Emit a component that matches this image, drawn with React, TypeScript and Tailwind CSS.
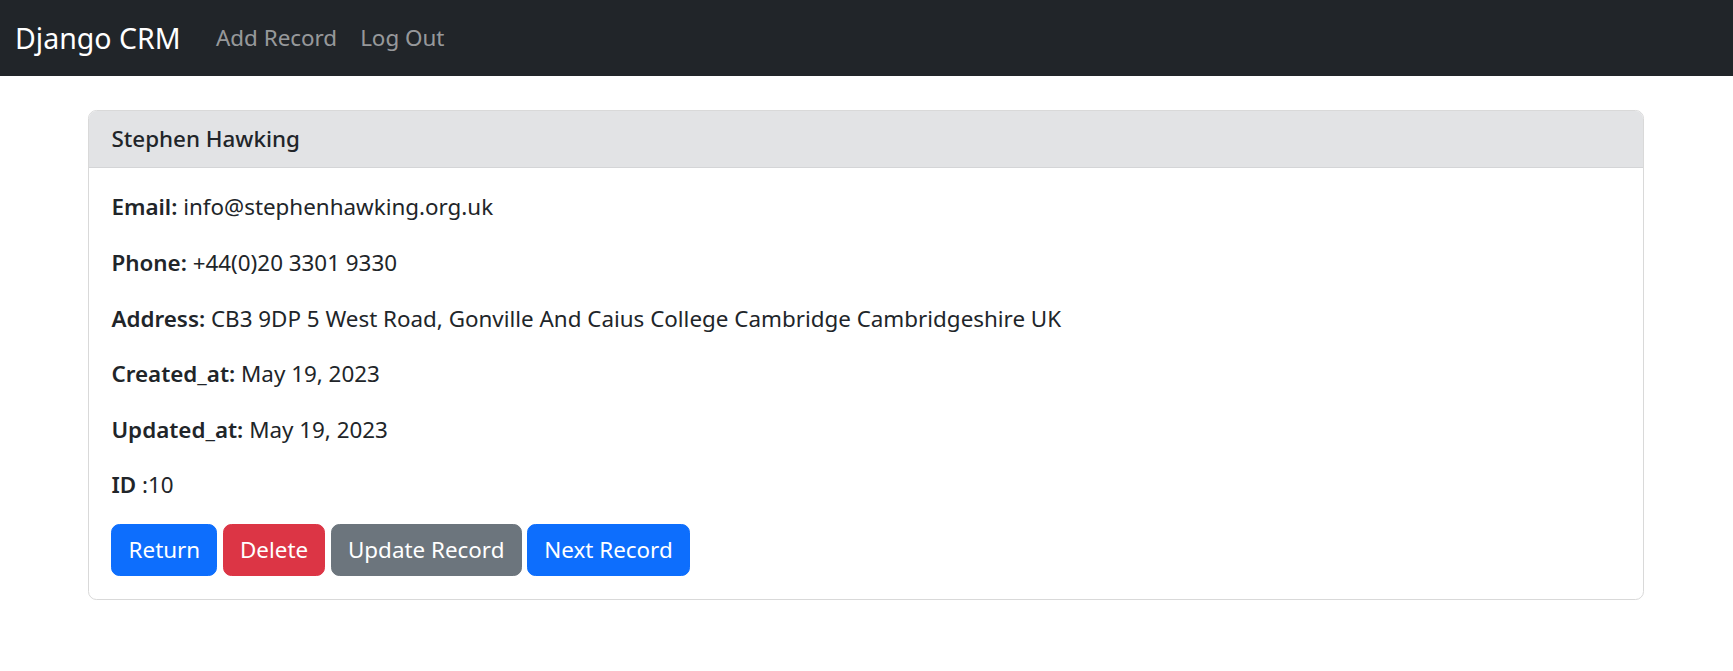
const fields: [string, string][] = [
  ['Email:', 'info@stephenhawking.org.uk'],
  ['Phone:', '+44(0)20 3301 9330'],
  ['Address:', 'CB3 9DP 5 West Road, Gonville And Caius College Cambridge Cambridgeshire UK'],
  ['Created_at:', 'May 19, 2023'],
  ['Updated_at:', 'May 19, 2023'],
];

const buttons = [
  { label: 'Return', cls: 'bg-[#0d6efd] border-[#0d6efd]' },
  { label: 'Delete', cls: 'bg-[#dc3545] border-[#dc3545]' },
  { label: 'Update Record', cls: 'bg-[#6c757d] border-[#6c757d]' },
  { label: 'Next Record', cls: 'bg-[#0d6efd] border-[#0d6efd]' },
];

export default function App() {
  return (
    <div className="min-h-screen bg-white text-[#212529] font-['Noto_Sans',sans-serif]">
      {/* Navbar */}
      <nav className="h-[76px] bg-[#212529] flex items-center pl-[15px] pr-[16.8px]">
        <a href="#" className="text-[28.5px] leading-[42px] text-white mr-[24px]">
          Django CRM
        </a>
        <ul className="flex items-center">
          <li>
            <a href="#" className="block px-[11.5px] text-[22.4px] leading-[33.6px] text-[rgba(255,255,255,0.55)]">
              Add Record
            </a>
          </li>
          <li>
            <a href="#" className="block px-[11.5px] text-[22.4px] leading-[33.6px] text-[rgba(255,255,255,0.55)]">
              Log Out
            </a>
          </li>
        </ul>
      </nav>

      {/* Record card */}
      <div className="w-[1556px] ml-[88px] mt-[34px]">
        <div className="border border-[#d9d9d9] rounded-[8.4px] overflow-hidden">
          <div className="bg-[#e2e3e5] border-b border-[#d4d5d7] px-[22.4px] py-[11.2px] text-[22.4px] leading-[33.6px] font-medium">
            Stephen Hawking
          </div>
          <div className="p-[22.4px] pb-[23px] text-[22.4px] leading-[33.6px]">
            {fields.map(([k, v]) => (
              <p key={k} className="mb-[22px]">
                <strong className="font-semibold">{k}</strong> {v}
              </p>
            ))}
            <p className="mb-[22px]">
              <strong className="font-semibold">ID</strong> :10
            </p>
            <div className="flex gap-[5.5px]">
              {buttons.map((b) => (
                <a
                  key={b.label}
                  href="#"
                  className={`inline-block text-white border-[1.4px] rounded-[8.4px] px-[16.2px] py-[8px] text-[22.4px] leading-[33.6px] ${b.cls}`}
                >
                  {b.label}
                </a>
              ))}
            </div>
          </div>
        </div>
      </div>
    </div>
  );
}
